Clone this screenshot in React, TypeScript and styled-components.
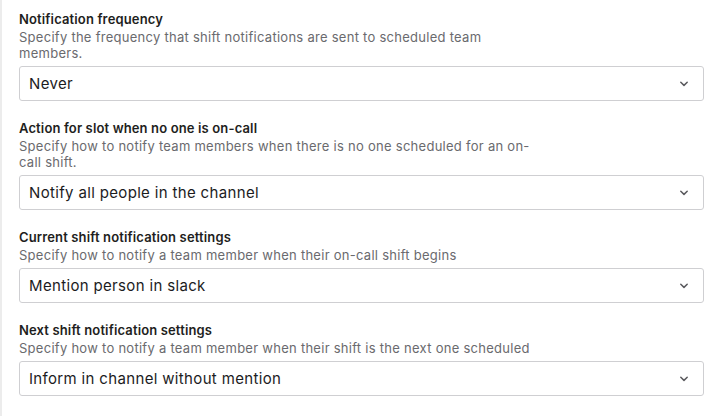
import React from "react";
import styled, { createGlobalStyle } from "styled-components";

const Global = createGlobalStyle`
  html, body { margin: 0; padding: 0; background: #ffffff; }
  body { font-family: Inter, "Noto Sans", sans-serif; -webkit-font-smoothing: antialiased; }
`;

const Page = styled.div`
  width: 719px;
  height: 416px;
  box-sizing: border-box;
  border-left: 2px solid #ececec;
  padding: 10px 15px 0 17px;
  display: flex;
  flex-direction: column;
  gap: 18px;
  overflow: hidden;
`;

const Field = styled.div`
  display: flex;
  flex-direction: column;
`;

const Title = styled.div`
  font-size: 13px;
  line-height: 18px;
  font-weight: 600;
  letter-spacing: 0.14px;
  color: #1e1e20;
  margin-bottom: 1px;
`;

const Desc = styled.div`
  font-size: 13px;
  line-height: 16px;
  letter-spacing: 0.27px;
  color: #6a6a6e;
  max-width: 511px;
`;

const Select = styled.div`
  margin-top: 5px;
  height: 35px;
  box-sizing: border-box;
  border: 1px solid #cfcfd2;
  border-radius: 3px;
  display: flex;
  align-items: center;
  justify-content: space-between;
  padding: 0 14px 0 9px;
  font-size: 15px;
  letter-spacing: 0.34px;
  color: #1c1c1e;
  background: #fff;
`;

const Chevron = () => (
  <svg width="10" height="6" viewBox="0 0 10 6" fill="none">
    <path d="M1.8 1.3 L5 4.4 L8.2 1.3" stroke="#5a5a5e" strokeWidth="1.5" strokeLinecap="round" strokeLinejoin="round" />
  </svg>
);

const fields = [
  {
    title: "Notification frequency",
    desc: "Specify the frequency that shift notifications are sent to scheduled team members.",
    value: "Never",
  },
  {
    title: "Action for slot when no one is on-call",
    desc: "Specify how to notify team members when there is no one scheduled for an on-call shift.",
    value: "Notify all people in the channel",
  },
  {
    title: "Current shift notification settings",
    desc: "Specify how to notify a team member when their on-call shift begins",
    value: "Mention person in slack",
  },
  {
    title: "Next shift notification settings",
    desc: "Specify how to notify a team member when their shift is the next one scheduled",
    value: "Inform in channel without mention",
  },
];

export default function App() {
  return (
    <>
      <Global />
      <Page>
        {fields.map((f) => (
          <Field key={f.title}>
            <Title>{f.title}</Title>
            <Desc>{f.desc}</Desc>
            <Select>
              <span>{f.value}</span>
              <Chevron />
            </Select>
          </Field>
        ))}
      </Page>
    </>
  );
}
